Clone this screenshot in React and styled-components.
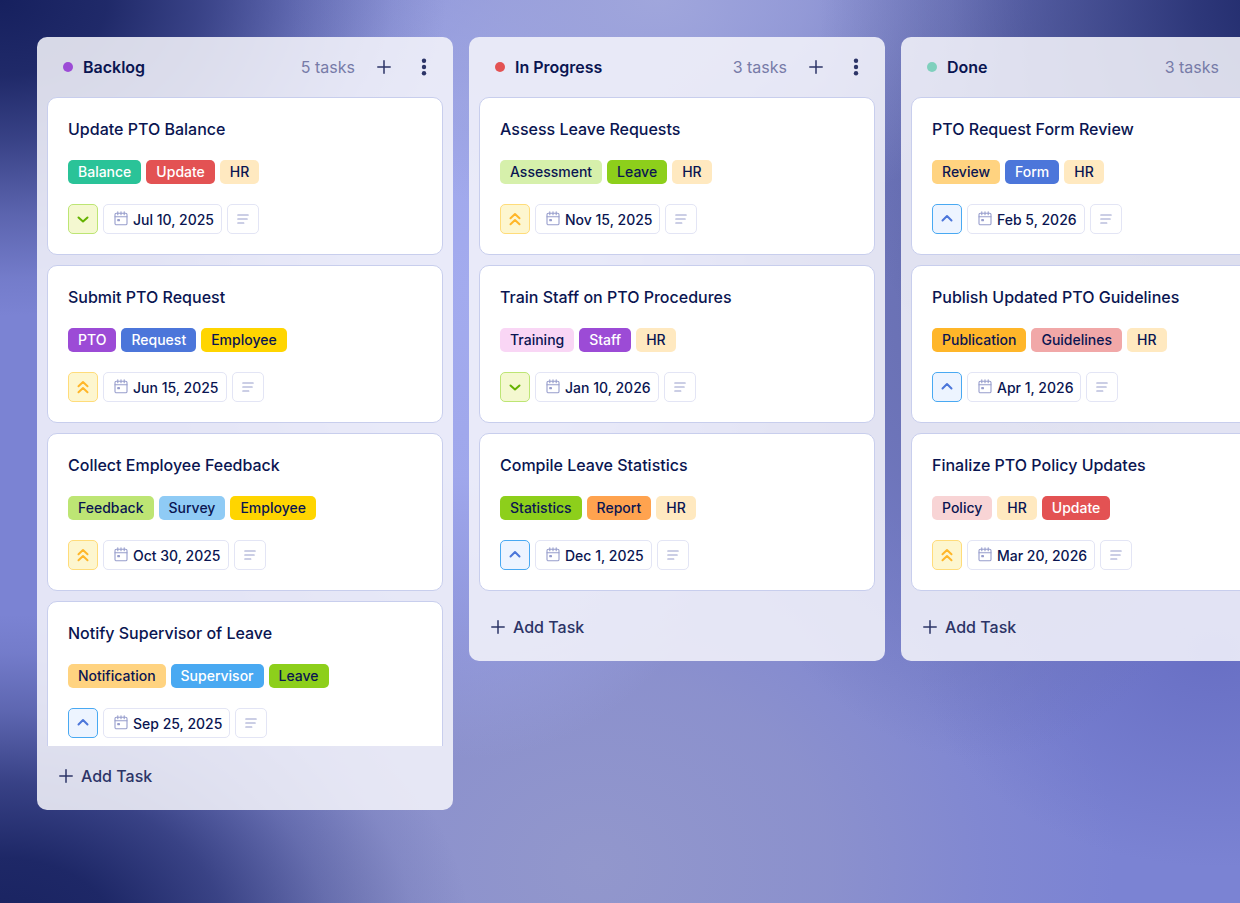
import React from 'react';
import styled, { createGlobalStyle } from 'styled-components';

const GlobalStyle = createGlobalStyle`
  * {
    box-sizing: border-box;
  }
  body {
    margin: 0;
    overflow: hidden;
    font-family: Inter, "Liberation Sans", sans-serif;
    color: #0a1551;
  }
  button {
    font-family: inherit;
    color: inherit;
    cursor: pointer;
  }
`;

const columns = [
  {
    name: 'Backlog',
    color: '#9c4bd6',
    count: 5,
    cards: [
      {
        title: 'Update PTO Balance',
        tags: [['Balance', '#2ac398', '#fff'], ['Update', '#e35253', '#fff'], ['HR', '#ffe9c0']],
        priority: 'low',
        date: 'Jul 10, 2025',
      },
      {
        title: 'Submit PTO Request',
        tags: [['PTO', '#9c4bd6', '#fff'], ['Request', '#4c76da', '#fff'], ['Employee', '#ffd500']],
        priority: 'high',
        date: 'Jun 15, 2025',
      },
      {
        title: 'Collect Employee Feedback',
        tags: [['Feedback', '#bde574'], ['Survey', '#8fcbf5'], ['Employee', '#ffd500']],
        priority: 'high',
        date: 'Oct 30, 2025',
      },
      {
        title: 'Notify Supervisor of Leave',
        tags: [['Notification', '#ffd380'], ['Supervisor', '#49a9f2', '#fff'], ['Leave', '#8dcf1b']],
        priority: 'medium',
        date: 'Sep 25, 2025',
      },
    ],
  },
  {
    name: 'In Progress',
    color: '#e35253',
    count: 3,
    cards: [
      {
        title: 'Assess Leave Requests',
        tags: [['Assessment', '#d6f0ab'], ['Leave', '#8dcf1b'], ['HR', '#ffe9c0']],
        priority: 'high',
        date: 'Nov 15, 2025',
      },
      {
        title: 'Train Staff on PTO Procedures',
        tags: [['Training', '#f9d6f5'], ['Staff', '#9c4bd6', '#fff'], ['HR', '#ffe9c0']],
        priority: 'low',
        date: 'Jan 10, 2026',
      },
      {
        title: 'Compile Leave Statistics',
        tags: [['Statistics', '#8dcf1b'], ['Report', '#ffa34f'], ['HR', '#ffe9c0']],
        priority: 'medium',
        date: 'Dec 1, 2025',
      },
    ],
  },
  {
    name: 'Done',
    color: '#7fd0bd',
    count: 3,
    cards: [
      {
        title: 'PTO Request Form Review',
        tags: [['Review', '#ffd380'], ['Form', '#4c76da', '#fff'], ['HR', '#ffe9c0']],
        priority: 'medium',
        date: 'Feb 5, 2026',
      },
      {
        title: 'Publish Updated PTO Guidelines',
        tags: [['Publication', '#ffb629'], ['Guidelines', '#f1a8a8'], ['HR', '#ffe9c0']],
        priority: 'medium',
        date: 'Apr 1, 2026',
      },
      {
        title: 'Finalize PTO Policy Updates',
        tags: [['Policy', '#f8d4d5'], ['HR', '#ffe9c0'], ['Update', '#e35253', '#fff']],
        priority: 'high',
        date: 'Mar 20, 2026',
      },
    ],
  },
];

const priorities = {
  low: { bg: '#f4f8d0', border: '#bde574', icon: '#64b200', paths: ['M3.5 6.5L8 10.5l4.5-4'] },
  medium: { bg: '#edf4ff', border: '#49a9f2', icon: '#4c76da', paths: ['M3.5 9.5L8 5l4.5 4.5'] },
  high: { bg: '#fdf6cf', border: '#ffdc7a', icon: '#ffb629', paths: ['M3.5 7.2L8 3l4.5 4.2', 'M3.5 13.2L8 9l4.5 4.2'] },
};

const PlusIcon = () => (
  <svg width="14" height="14" viewBox="0 0 14 14" fill="none" stroke="currentColor" strokeWidth="1.5" strokeLinecap="round">
    <path d="M7 .8v12.4M.8 7h12.4" />
  </svg>
);

const MoreIcon = () => (
  <svg width="6" height="18" viewBox="0 0 6 18" fill="currentColor">
    <circle cx="3" cy="2.8" r="2.2" />
    <circle cx="3" cy="9" r="2.2" />
    <circle cx="3" cy="15.2" r="2.2" />
  </svg>
);

const CalendarIcon = () => (
  <svg width="14" height="15" viewBox="0 0 14 15" fill="none" stroke="#979dcc" strokeWidth="1.1" strokeLinecap="round">
    <rect x="1" y="2.2" width="12" height="11.6" rx="1.4" />
    <path d="M1 5.8h12M3.8 .8v3M7 .8v3M10.2 .8v3" />
    <rect x="3.2" y="8" width="2.8" height="2.2" rx=".4" fill="#979dcc" stroke="none" />
  </svg>
);

const LinesIcon = () => (
  <svg width="12" height="10" viewBox="0 0 12 10" fill="none" stroke="#979dcc" strokeWidth="1.2" strokeLinecap="round">
    <path d="M.8 1h10.4M.8 5h9.4M.8 9h6" />
  </svg>
);

const Task = ({ title, tags, priority, date }) => {
  const level = priorities[priority];

  return (
    <Card>
      <CardTitle>{title}</CardTitle>
      <TagRow>
        {tags.map(([label, bg, color]) => (
          <Tag key={label} $bg={bg} $color={color}>{label}</Tag>
        ))}
      </TagRow>
      <MetaRow>
        <PriorityButton type="button" aria-label={priority} $bg={level.bg} $border={level.border}>
          <svg width="16" height="16" viewBox="0 0 16 16" fill="none" stroke={level.icon} strokeWidth="2" strokeLinecap="round" strokeLinejoin="round">
            {level.paths.map((d) => <path key={d} d={d} />)}
          </svg>
        </PriorityButton>
        <DateButton type="button">
          <CalendarIcon />
          {date}
        </DateButton>
        <NoteButton type="button" aria-label="Description">
          <LinesIcon />
        </NoteButton>
      </MetaRow>
    </Card>
  );
};

const App = () => (
  <>
    <GlobalStyle />
    <Board>
      {columns.map((column) => (
        <Column key={column.name}>
          <ColumnHeader>
            <Dot $color={column.color} />
            <ColumnName>{column.name}</ColumnName>
            <Count>{column.count} tasks</Count>
            <IconButton type="button" aria-label="Add task"><PlusIcon /></IconButton>
            <IconButton type="button" aria-label="More"><MoreIcon /></IconButton>
          </ColumnHeader>
          <CardList>
            {column.cards.map((card) => <Task key={card.title} {...card} />)}
          </CardList>
          <AddButton type="button">
            <PlusIcon />
            Add Task
          </AddButton>
        </Column>
      ))}
    </Board>
  </>
);

const Board = styled.main`
  display: flex;
  align-items: flex-start;
  gap: 16px;
  min-height: 100vh;
  padding: 37px 37px 93px;
  overflow: hidden;
  background:
    radial-gradient(ellipse 36% 35% at 0% 0%, #16205e 0%, rgba(24, 34, 96, 0.92) 24%, rgba(30, 40, 104, 0.72) 44%, rgba(36, 46, 110, 0.36) 68%, rgba(50, 60, 125, 0.1) 88%, rgba(60, 70, 135, 0) 100%),
    radial-gradient(ellipse 38% 36% at 0% 104%, #18225f 0%, rgba(24, 34, 96, 0.94) 25%, rgba(30, 40, 104, 0.72) 48%, rgba(36, 46, 110, 0.34) 70%, rgba(50, 60, 125, 0.1) 88%, rgba(60, 70, 135, 0) 100%),
    radial-gradient(ellipse 38% 60% at 104% 0%, #1e2868 0%, rgba(32, 42, 106, 0.85) 20%, rgba(40, 50, 112, 0.55) 48%, rgba(50, 60, 122, 0.24) 72%, rgba(60, 70, 135, 0) 100%),
    radial-gradient(ellipse 30% 26% at 53% 0%, #a0a6dc 0%, rgba(158, 164, 218, 0.7) 40%, rgba(150, 156, 210, 0.3) 75%, rgba(150, 156, 210, 0) 100%),
    radial-gradient(ellipse 26% 52% at 38% 32%, #a3abee 0%, rgba(163, 171, 238, 0.9) 40%, rgba(163, 171, 238, 0.4) 72%, rgba(163, 171, 238, 0) 100%),
    radial-gradient(ellipse 24% 50% at 79% 34%, #666dae 0%, rgba(104, 111, 176, 0.7) 45%, rgba(104, 111, 176, 0) 100%),
    radial-gradient(ellipse 24% 24% at 98% 72%, #686fc4 0%, rgba(104, 111, 196, 0) 100%),
    radial-gradient(ellipse 42% 48% at 48% 96%, #9297cc 0%, rgba(142, 147, 204, 0.85) 45%, rgba(142, 147, 206, 0.3) 75%, rgba(142, 147, 206, 0) 100%),
    #7b83d3;
`;

const Column = styled.section`
  display: flex;
  flex-direction: column;
  flex: 0 0 416px;
  max-height: calc(100vh - 130px);
  padding: 0 10px;
  border-radius: 10px;
  background: rgba(243, 244, 250, 0.87);
`;

const ColumnHeader = styled.header`
  display: flex;
  flex-shrink: 0;
  align-items: center;
  height: 60px;
  padding: 0 3px 0 16px;
`;

const Dot = styled.span`
  width: 10px;
  height: 10px;
  border-radius: 50%;
  background: ${(props) => props.$color};
`;

const ColumnName = styled.h2`
  flex: 1;
  margin: 0 0 0 10px;
  font-size: 16px;
  line-height: 22px;
  font-weight: 600;
`;

const Count = styled.span`
  margin-right: 13px;
  font-size: 16px;
  line-height: 22px;
  color: #777ba8;
`;

const IconButton = styled.button`
  display: flex;
  align-items: center;
  justify-content: center;
  width: 32px;
  height: 32px;
  padding: 0;
  border: 0;
  background: none;
  color: #2c3467;

  & + & {
    margin-left: 8px;
  }
`;

const CardList = styled.div`
  display: flex;
  flex-direction: column;
  gap: 10px;
  min-height: 0;
  padding-bottom: 6px;
  overflow: hidden;
`;

const Card = styled.article`
  flex-shrink: 0;
  padding: 20px;
  border: 1px solid #c8ceed;
  border-radius: 10px;
  background: #fff;
`;

const CardTitle = styled.h3`
  margin: 0 0 20px;
  font-size: 16px;
  line-height: 22px;
  font-weight: 500;
`;

const TagRow = styled.div`
  display: flex;
  gap: 5px;
  margin-bottom: 20px;
`;

const Tag = styled.span`
  padding: 0 10px;
  border-radius: 5px;
  font-size: 14px;
  line-height: 24px;
  font-weight: 500;
  background: ${(props) => props.$bg};
  color: ${(props) => props.$color || '#0a1551'};
`;

const MetaRow = styled.div`
  display: flex;
  gap: 5px;
`;

const Chip = styled.button`
  display: flex;
  align-items: center;
  justify-content: center;
  height: 30px;
  padding: 0;
  border: 1px solid #e3e5f5;
  border-radius: 5px;
  background: #fff;
`;

const PriorityButton = styled(Chip)`
  width: 30px;
  border-color: ${(props) => props.$border};
  background: ${(props) => props.$bg};
`;

const DateButton = styled(Chip)`
  gap: 5px;
  padding: 0 7px 0 10px;
  font-size: 14px;
  font-weight: 500;

  svg {
    margin-bottom: 2px;
  }
`;

const NoteButton = styled(Chip)`
  width: 32px;
`;

const AddButton = styled.button`
  display: flex;
  flex-shrink: 0;
  align-items: center;
  gap: 8px;
  height: 64px;
  padding: 0 12px 4px;
  border: 0;
  background: none;
  font-size: 16px;
  font-weight: 500;
  color: #2c3467;
`;

export default App;
